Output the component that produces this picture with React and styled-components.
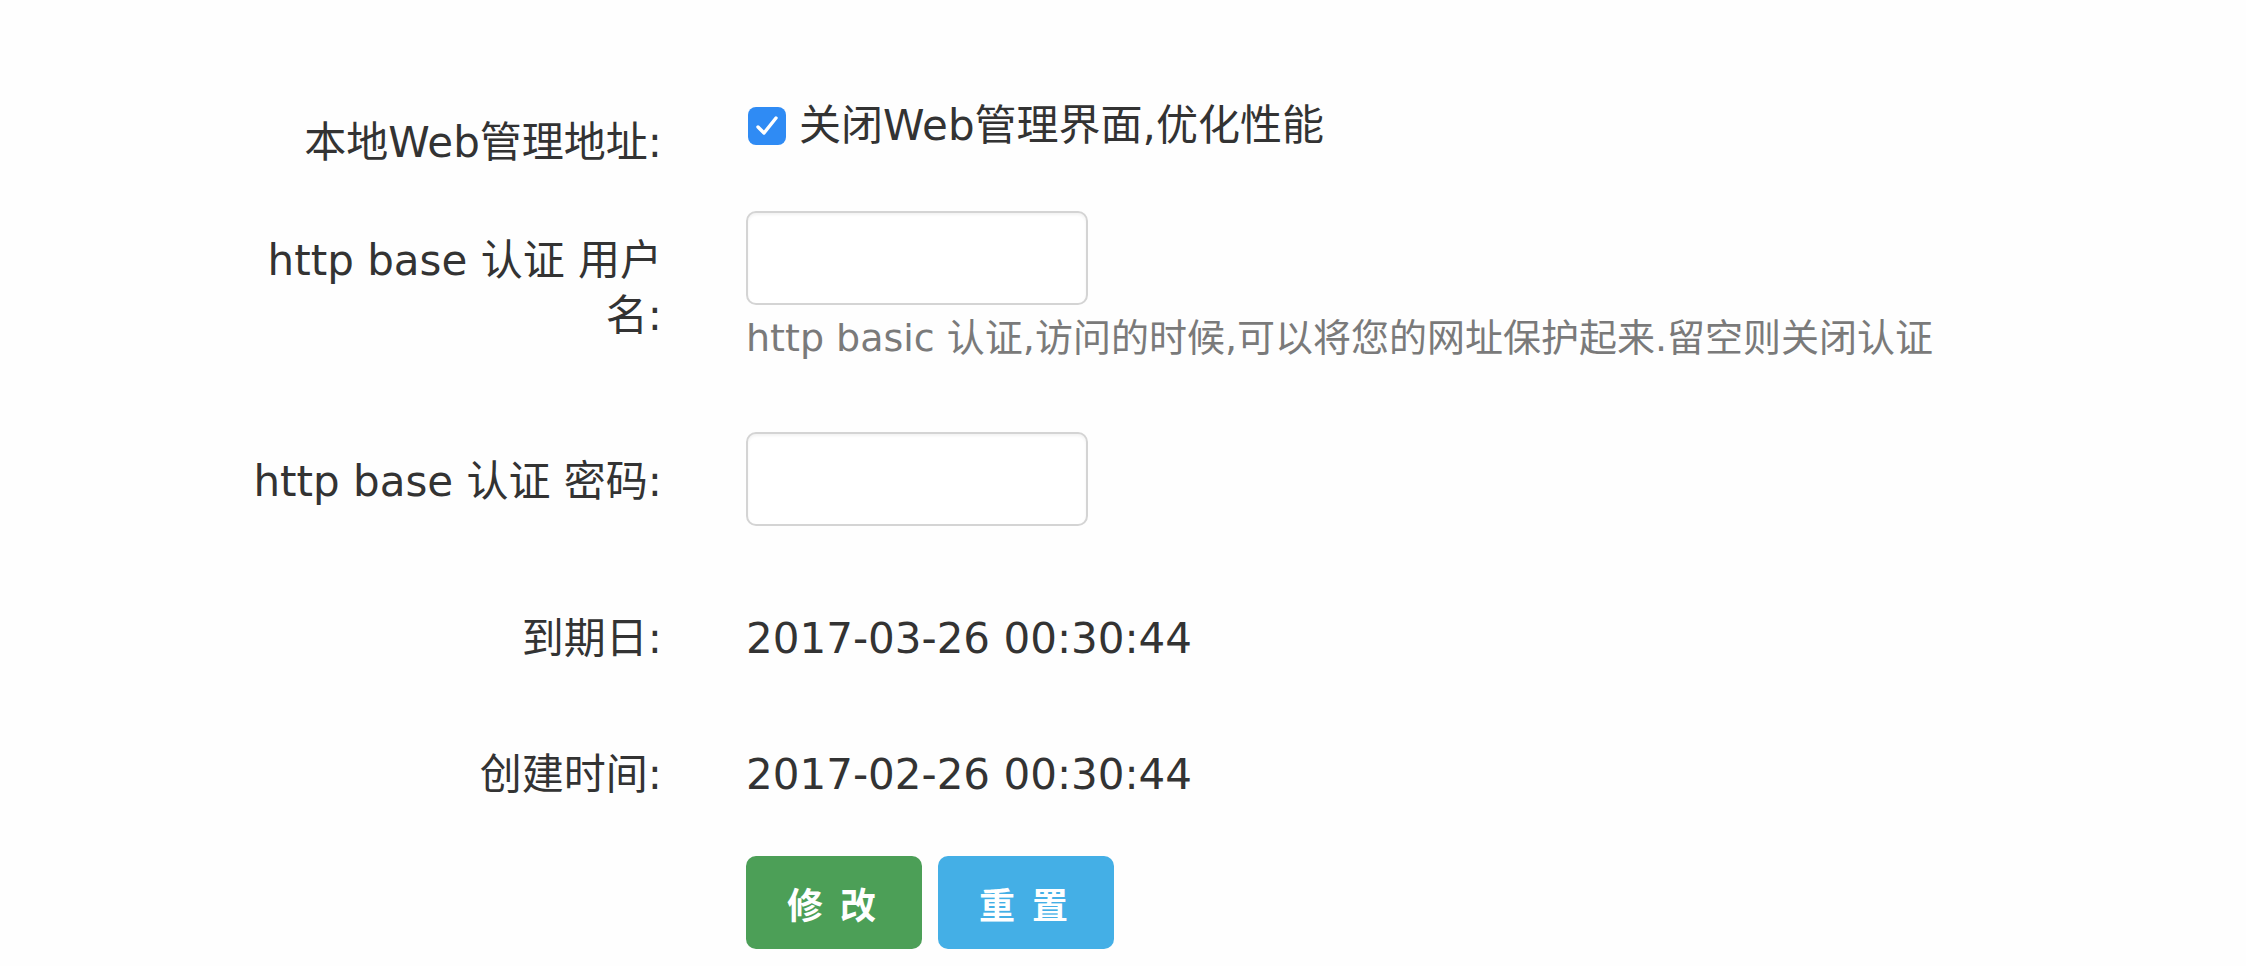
import React from 'react'
import styled, { createGlobalStyle } from 'styled-components'

const GlobalStyle = createGlobalStyle`
  html, body {
    margin: 0;
    padding: 0;
    background: #fefefe;
  }
  body {
    font-family: "DejaVu Sans", "Noto Sans CJK SC", sans-serif;
    color: #333;
  }
`

const fields = [
  { label: 'http base 认证 用户名:', hint: 'http basic 认证,访问的时候,可以将您的网址保护起来.留空则关闭认证' },
  { label: 'http base 认证 密码:' },
]

const dates = [
  { label: '到期日:', value: '2017-03-26 00:30:44' },
  { label: '创建时间:', value: '2017-02-26 00:30:44' },
]

const App = () => {
  return (
    <>
      <GlobalStyle />
      <Form>
        <Group>
          <Label $top={19}>本地Web管理地址:</Label>
          <CheckLine>
            <CheckBox>
              <svg width="26" height="24" viewBox="0 0 26 24">
                <path d="M4 13 L10 19 L22 4" fill="none" stroke="#fff" strokeWidth="3.4" strokeLinecap="round" strokeLinejoin="round" />
              </svg>
            </CheckBox>
            关闭Web管理界面,优化性能
          </CheckLine>
        </Group>
        {fields.map((f, i) => (
          <Group key={i}>
            <Label $top={22}>{f.label}</Label>
            <Control>
              <Input type="text" />
              {f.hint && <Hint>{f.hint}</Hint>}
            </Control>
          </Group>
        ))}
        {dates.map((d, i) => (
          <Group key={i} $gap={37}>
            <Label $top={44}>{d.label}</Label>
            <Static>{d.value}</Static>
          </Group>
        ))}
        <Buttons>
          <Button $bg="#4c9f57">修改</Button>
          <Button $bg="#44afe6">重置</Button>
        </Buttons>
      </Form>
    </>
  )
}

export default App

const Form = styled.form`
  display: flex;
  flex-direction: column;
  padding: 96px 0 0 242px;
  font-size: 42px;
  line-height: 55px;
`

const Group = styled.div`
  display: grid;
  grid-template-columns: 420px 1fr;
  column-gap: 84px;
  align-items: start;
  margin-bottom: ${p => p.$gap || 41}px;
`

const Label = styled.label`
  text-align: right;
  padding-top: ${p => p.$top}px;
  color: #333;
`

const CheckLine = styled.div`
  display: flex;
  align-items: center;
  gap: 13px;
  padding-top: 2px;
  color: #333;
`

const CheckBox = styled.span`
  width: 38px;
  height: 38px;
  border-radius: 8px;
  background: #2f8bf4;
  display: inline-flex;
  align-items: center;
  justify-content: center;
  margin-left: 2px;
`

const Control = styled.div`
  display: flex;
  flex-direction: column;
`

const Input = styled.input`
  width: 342px;
  height: 94px;
  box-sizing: border-box;
  border: 2px solid #d4d4d4;
  border-radius: 10px;
  background: #fff;
  box-shadow: inset 0 2px 3px rgba(0, 0, 0, 0.05);
  outline: none;
`

const Hint = styled.div`
  font-size: 38px;
  line-height: 50px;
  color: #7a7a7a;
  margin-top: 8px;
  margin-bottom: 28px;
  white-space: nowrap;
`

const Static = styled.div`
  padding-top: 44px;
  color: #333;
`

const Buttons = styled.div`
  display: flex;
  gap: 16px;
  margin-left: 504px;
  margin-top: 17px;
`

const Button = styled.button`
  width: 176px;
  height: 93px;
  border: none;
  border-radius: 10px;
  background: ${p => p.$bg};
  color: #fff;
  font-family: "Noto Sans CJK SC", sans-serif;
  font-size: 36px;
  font-weight: 700;
  letter-spacing: 17px;
  padding: 0 0 0 12px;
`
